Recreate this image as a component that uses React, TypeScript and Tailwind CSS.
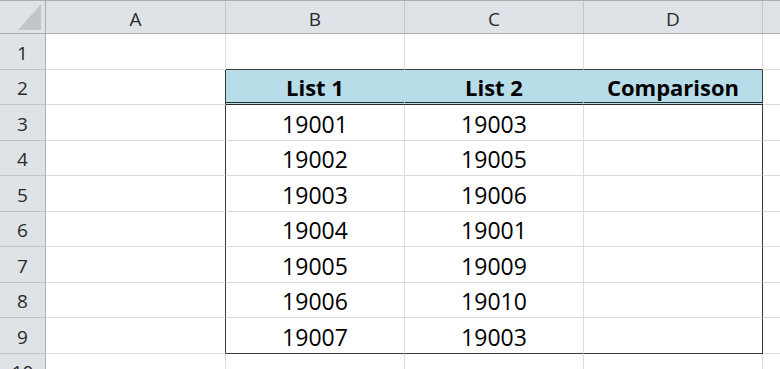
import React from "react";

const list1 = ["19001", "19002", "19003", "19004", "19005", "19006", "19007"];
const list2 = ["19003", "19005", "19006", "19001", "19009", "19010", "19003"];

function RowHead({ n }: { n: number }) {
  return (
    <div className="w-[46px] shrink-0 h-full bg-[#dfe3e8] border-r border-b border-r-[#a9aeb3] border-b-[#bfc4c9] flex items-center justify-center pt-[3px] text-[19px] text-[#2a2a2a]">
      {n}
    </div>
  );
}

export default function App() {
  const rows: React.ReactNode[] = [];

  rows.push(
    <div key="r1" className="flex h-[35.5px]">
      <RowHead n={1} />
      <div className="w-[180px] shrink-0 h-full border-r border-b border-[#dadcde]" />
      <div className="w-[179px] shrink-0 h-full border-r border-[#dadcde] border-b border-b-[#3b3b3b]" />
      <div className="w-[179px] shrink-0 h-full border-r border-[#dadcde] border-b border-b-[#3b3b3b]" />
      <div className="w-[179px] shrink-0 h-full border-r border-[#dadcde] border-b border-b-[#3b3b3b]" />
      <div className="flex-1 h-full border-b border-[#dadcde]" />
    </div>
  );

  rows.push(
    <div key="r2" className="flex h-[35.5px]">
      <RowHead n={2} />
      <div className="w-[180px] shrink-0 h-full border-b border-[#dadcde] border-r border-r-[#3b3b3b]" />
      <div className="w-[179px] shrink-0 h-full bg-[#b7dde8] border-r border-r-[#b7dde8] border-b-[3px] border-double border-b-[#2b2b2b] flex items-center justify-center pt-[4px] font-bold text-[22px] text-black">
        List 1
      </div>
      <div className="w-[179px] shrink-0 h-full bg-[#b7dde8] border-r border-r-[#b7dde8] border-b-[3px] border-double border-b-[#2b2b2b] flex items-center justify-center pt-[4px] font-bold text-[22px] text-black">
        List 2
      </div>
      <div className="w-[179px] shrink-0 h-full bg-[#b7dde8] border-r border-r-[#3b3b3b] border-b-[3px] border-double border-b-[#2b2b2b] flex items-center justify-center pt-[4px] font-bold text-[22px] text-black">
        Comparison
      </div>
      <div className="flex-1 h-full border-b border-[#dadcde]" />
    </div>
  );

  list1.forEach((v, i) => {
    const last = i === list1.length - 1;
    const bottom = last ? "border-b-[#3b3b3b]" : "border-b-[#dadcde]";
    rows.push(
      <div key={"d" + i} className="flex h-[35.5px]">
        <RowHead n={i + 3} />
        <div className="w-[180px] shrink-0 h-full border-b border-b-[#dadcde] border-r border-r-[#3b3b3b]" />
        <div className={`w-[179px] shrink-0 h-full border-r border-r-[#dadcde] border-b ${bottom} flex items-center justify-center pt-[3px] text-[23px] text-black`}>
          {v}
        </div>
        <div className={`w-[179px] shrink-0 h-full border-r border-r-[#dadcde] border-b ${bottom} flex items-center justify-center pt-[3px] text-[23px] text-black`}>
          {list2[i]}
        </div>
        <div className={`w-[179px] shrink-0 h-full border-r border-r-[#3b3b3b] border-b ${bottom}`} />
        <div className="flex-1 h-full border-b border-[#dadcde]" />
      </div>
    );
  });

  rows.push(
    <div key="r10" className="flex h-[35.5px]">
      <RowHead n={10} />
      <div className="w-[180px] shrink-0 h-full border-r border-b border-[#dadcde]" />
      <div className="w-[179px] shrink-0 h-full border-r border-b border-[#dadcde]" />
      <div className="w-[179px] shrink-0 h-full border-r border-b border-[#dadcde]" />
      <div className="w-[179px] shrink-0 h-full border-r border-b border-[#dadcde]" />
      <div className="flex-1 h-full border-b border-[#dadcde]" />
    </div>
  );

  const colHead = "shrink-0 h-full border-r border-r-[#c3c7cc] flex items-center justify-center pt-[4px] text-[19px] text-[#2a2a2a]";

  return (
    <div className="w-[780px] h-[369px] overflow-hidden bg-white font-['Open_Sans',sans-serif]">
      <div className="flex h-[34px] bg-[#dfe3e8] border-t border-b border-t-[#a9aeb3] border-b-[#a9aeb3]">
        <div className="w-[46px] shrink-0 h-full border-r border-r-[#a9aeb3] relative">
          <svg className="absolute left-0 top-0" width="45" height="32" viewBox="0 0 45 32">
            <polygon points="41,3 41,29 18,29" fill="#c2c6cb" />
          </svg>
        </div>
        <div className={"w-[180px] " + colHead}>A</div>
        <div className={"w-[179px] " + colHead}>B</div>
        <div className={"w-[179px] " + colHead}>C</div>
        <div className={"w-[179px] " + colHead}>D</div>
        <div className="flex-1 h-full" />
      </div>
      {rows}
    </div>
  );
}
